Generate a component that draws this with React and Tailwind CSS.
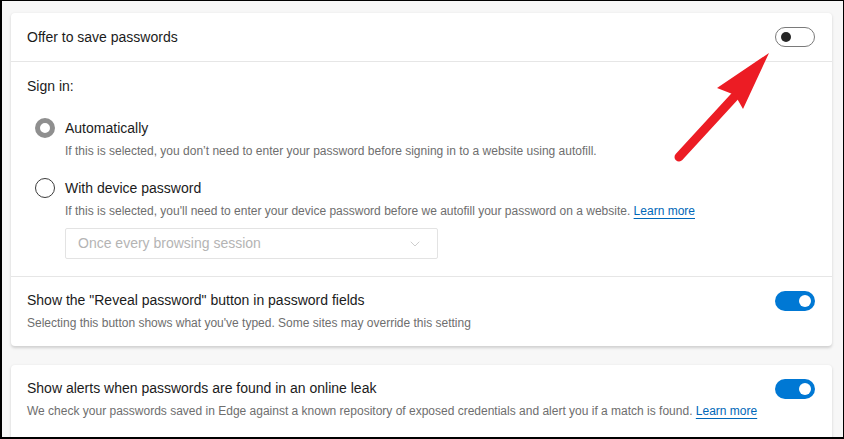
import { ChevronDown } from "lucide-react";

const font = { fontFamily: '"Liberation Sans", Arial, sans-serif' };

function Toggle({ on }) {
  if (on) {
    return (
      <div className="flex h-5 w-10 shrink-0 items-center justify-end rounded-full bg-[#0078d4] pr-[4px]">
        <div className="h-3 w-3 rounded-full bg-white" />
      </div>
    );
  }
  return (
    <div className="flex h-5 w-10 shrink-0 items-center rounded-full border border-[#7a7a7a] bg-white pl-[5px]">
      <div className="h-[10px] w-[10px] rounded-full bg-[#262626]" />
    </div>
  );
}

function Radio({ checked }) {
  if (checked) {
    return <div className="h-5 w-5 shrink-0 rounded-full border-[5px] border-[#8f8f8f] bg-white" />;
  }
  return <div className="h-5 w-5 shrink-0 rounded-full border border-[#3b3b3b] bg-white" />;
}

function LearnMore() {
  return (
    <span className="text-[#0067b8] underline decoration-[#0067b8] underline-offset-[3px]">
      Learn more
    </span>
  );
}

function RadioOption({ checked, title, children }) {
  return (
    <div className="flex gap-[10px]">
      <Radio checked={checked} />
      <div className="min-w-0 flex-1">
        <p className="text-[14px] leading-5 text-[#1b1b1b]">{title}</p>
        <p className="mt-[5px] text-[12px] leading-4 text-[#6e6e6e]">{children}</p>
      </div>
    </div>
  );
}

function ToggleRow({ title, description, on }) {
  return (
    <div className="flex items-start justify-between pl-4 pr-[17px]">
      <div>
        <p className="text-[14px] leading-5 text-[#1b1b1b]">{title}</p>
        <p className="mt-[5px] text-[12px] leading-4 text-[#6e6e6e]">{description}</p>
      </div>
      <div className="pt-[1px]">
        <Toggle on={on} />
      </div>
    </div>
  );
}

export default function App() {
  return (
    <div
      className="relative h-[439px] w-[844px] overflow-hidden border-b-2 border-l-2 border-r border-t border-black bg-[#f7f7f7]"
      style={font}
    >
      <div className="ml-[9px] mt-[12px] w-[821px] rounded-[4px] bg-white shadow-[0_1.5px_3px_rgba(0,0,0,0.16)]">
        <div className="flex h-[49px] items-center justify-between border-b border-[#e6e6e6] pl-4 pr-[17px]">
          <p className="text-[14px] text-[#1b1b1b]">Offer to save passwords</p>
          <Toggle on={false} />
        </div>

        <div className="border-b border-[#e6e6e6] pb-[17px] pt-[14px]">
          <p className="pl-4 text-[14px] leading-5 text-[#1b1b1b]">Sign in:</p>
          <div className="mt-[22px] flex flex-col gap-[19px] pl-6">
            <RadioOption checked title="Automatically">
              If this is selected, you don’t need to enter your password before signing in to a website using autofill.
            </RadioOption>
            <RadioOption title="With device password">
              If this is selected, you'll need to enter your device password before we autofill your password on a website.{" "}
              <LearnMore />
            </RadioOption>
          </div>
          <div className="ml-[54px] mt-[9px] flex h-[31px] w-[373px] items-center justify-between rounded-[2px] border border-[#e3e3e3] pl-3 pr-[14px]">
            <span className="text-[14px] text-[#b4b4b4]">Once every browsing session</span>
            <ChevronDown className="h-4 w-4 text-[#c4c4c4]" strokeWidth={1.25} />
          </div>
        </div>

        <div className="pb-[15px] pt-[13px]">
          <ToggleRow
            on
            title={'Show the "Reveal password" button in password fields'}
            description="Selecting this button shows what you've typed. Some sites may override this setting"
          />
        </div>
      </div>

      <div className="ml-[9px] mt-[19px] h-[100px] w-[821px] rounded-[4px] bg-white pt-[13px] shadow-[0_1.5px_3px_rgba(0,0,0,0.16)]">
        <ToggleRow
          on
          title="Show alerts when passwords are found in an online leak"
          description={
            <>
              We check your passwords saved in Edge against a known repository of exposed credentials and alert you if a match is found.{" "}
              <LearnMore />
            </>
          }
        />
      </div>

      <svg
        className="pointer-events-none absolute left-[-2px] top-[-1px]"
        width="844"
        height="439"
        viewBox="0 0 844 439"
      >
        <line x1="679" y1="157" x2="736" y2="95" stroke="#ec1c24" strokeWidth="9" strokeLinecap="round" />
        <polygon points="769,53 717,88 735,95 743,109" fill="#ec1c24" />
      </svg>
    </div>
  );
}
